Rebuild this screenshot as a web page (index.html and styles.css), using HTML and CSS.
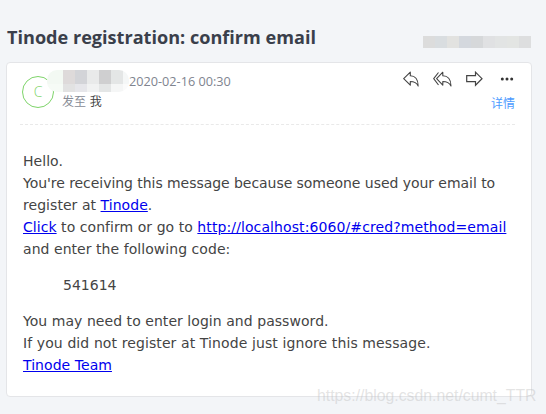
FILE: index.html
```html
<!DOCTYPE html>
<html lang="zh">
<head>
<meta charset="utf-8">
<title>Tinode registration: confirm email</title>
<link rel="stylesheet" href="styles.css">
</head>
<body>
<header class="subject">
  <h1>Tinode registration: confirm email</h1>
  <div class="mosaic-top">
    <i class="t1"></i><i class="t2"></i><i class="t3"></i><i class="t4"></i><i class="t5"></i><i class="t6"></i><i class="t7"></i><i class="t8"></i><i class="t9"></i>
  </div>
</header>
<main class="card">
  <section class="head">
    <div class="avatar">C</div>
    <div class="meta">
      <div class="line1">
        <div class="mosaic-name">
          <i class="n1"></i><i class="n2"></i><i class="n3"></i><i class="n4"></i><i class="n5"></i><i class="n6"></i><i class="n7"></i>
          <i class="m1"></i><i class="m2"></i><i class="m3"></i><i class="m4"></i><i class="m5"></i><i class="m6"></i><i class="m7"></i>
        </div>
        <span class="date">2020-02-16 00:30</span>
      </div>
      <div class="line2"><span class="muted">发至</span> <span class="me">我</span></div>
    </div>
    <div class="actions">
      <div class="icons">
        <svg class="ic-reply" width="16" height="16" viewBox="0 0 16 16"><path d="M0.7 7.7 L7.3 1.2 V4.7 C12 4.7 15.2 8.5 15.2 15 C13.5 11.3 11 10.5 7.3 10.5 V14.2 Z" fill="none" stroke="#444" stroke-width="1.1" stroke-linejoin="round"/></svg>
        <svg class="ic-replyall" width="19" height="16" viewBox="0 0 19 16"><path d="M5.5 1.5 L0.7 7.7 L5.5 14 M9.8 1.2 L3.6 7.7 L9.8 14.2 V10.5 C13.5 10.5 16.2 11.3 18 15 C18 8.5 14.7 4.7 9.8 4.7 Z" fill="none" stroke="#444" stroke-width="1.1" stroke-linejoin="round"/></svg>
        <svg class="ic-forward" width="17" height="16" viewBox="0 0 17 16"><path d="M0.7 4.7 H9.5 V1.2 L16 7.7 L9.5 14.2 V10.7 H0.7 Z" fill="none" stroke="#444" stroke-width="1.2" stroke-linejoin="miter"/></svg>
        <svg class="ic-more" width="14" height="16" viewBox="0 0 14 16"><circle cx="2.3" cy="8" r="1.5" fill="#333"/><circle cx="7" cy="8" r="1.5" fill="#333"/><circle cx="11.7" cy="8" r="1.5" fill="#333"/></svg>
      </div>
      <a class="detail">详情</a>
    </div>
  </section>
  <section class="body">
    <p>Hello.<br>
    <span class="tight">You're receiving this message because someone used your email to</span><br>
    register at <a href="#">Tinode</a>.<br>
    <a href="#">Click</a> to confirm or go to <a class="wide" href="#">http://localhost:6060/#cred?method=email</a><br>
    and enter the following code:</p>
    <p class="code">541614</p>
    <p>You may need to enter login and password.<br>
    <span class="wide">If you did not register at Tinode just ignore this message.</span><br>
    <a href="#">Tinode Team</a></p>
  </section>
</main>
<div class="watermark">https://blog.csdn.net/cumt_TTR</div>
</body>
</html>
```
FILE: styles.css
```css
html, body { margin: 0; padding: 0; }
body {
  position: relative;
  width: 546px;
  height: 414px;
  overflow: hidden;
  background: #f3f5f8;
  font-family: "DejaVu Sans", sans-serif;
}
.subject { height: 62px; box-sizing: border-box; padding: 24px 0 0 7px; position: relative; }
.subject h1 {
  margin: 0;
  font: 700 18.1px/26px "Open Sans", sans-serif;
  color: #3a3f4b;
}
.mosaic-top { position: absolute; left: 423px; top: 36px; display: flex; }
.mosaic-top i { display: block; width: 12px; height: 12px; }
.t1 { background: #dcdcdc; }
.t2 { background: #d9dde0; }
.t3 { background: #e2e2e0; }
.t4 { background: #d4d8de; }
.t5 { background: #d6d8da; }
.t6 { background: #e0e1e3; }
.t7 { background: #e2e4e4; }
.t8 { background: #e3e5e3; }
.t9 { background: #dddedf; }
.card {
  margin-left: 6px;
  width: 526px;
  height: 335px;
  box-sizing: border-box;
  background: #fff;
  border: 1px solid #e4e5e8;
  border-radius: 4px;
}
.head {
  display: flex;
  margin: 0 16px 0 13px;
  height: 62px;
  box-sizing: border-box;
  padding-top: 5px;
  border-bottom: 1px dashed #e9e9e9;
}
.avatar {
  flex: none;
  width: 30px;
  height: 30px;
  margin-top: 8px;
  margin-left: 2px;
  border: 1px solid #7ed46a;
  border-radius: 50%;
  color: #7ed46a;
  font: 300 14px/30px "Open Sans", sans-serif;
  text-align: center;
}
.meta { margin-left: 8px; flex: 1; }
.line1 { display: flex; align-items: center; height: 26px; }
.mosaic-name {
  flex: none;
  margin-left: -15px;
  display: grid;
  grid-template-columns: 16px 12px 12px 12px 12px 12px 6px;
  grid-template-rows: 14px 8px;
  width: 82px;
  height: 22px;
  border-radius: 10px;
  overflow: hidden;
}
.n1 { background: #f3f9f3; }
.n2 { background: #dedada; }
.n3 { background: #d3d4d8; }
.n4 { background: #e9eaea; }
.n5 { background: #cfcfd0; }
.n6 { background: #e4e6e6; }
.n7 { background: #f5f7f7; }
.m1 { background: #f6fbf6; }
.m2 { background: #e2e2e2; }
.m3 { background: #e6e6ea; }
.m4 { background: #f1f2f2; }
.m5 { background: #e4e6e6; }
.m6 { background: #f5f6f6; }
.m7 { background: #fbfbfb; }
.date { font: 12.7px/16px "Open Sans", sans-serif; color: #80848f; }
.line2 { margin-top: -1px; font: 12px/16px "Noto Sans CJK SC", sans-serif; word-spacing: 1px; }
.muted { color: #888c96; }
.me { color: #444; }
.actions { display: flex; flex-direction: column; align-items: flex-end; }
.icons { display: flex; height: 22px; align-items: center; padding-right: 1.5px; }
.ic-replyall, .ic-forward { margin-left: 14px; }
.ic-more { margin-left: 16.5px; }
.detail { margin-top: 5px; font: 12px/16px "Noto Sans CJK SC", sans-serif; color: #4d9bff; }
.body {
  padding: 25px 16px 0 16px;
  font-size: 14px;
  line-height: 22px;
  letter-spacing: 0.05px;
  color: #444;
}
.body p { margin: 0 0 14px; }
.body .code { padding-left: 40px; letter-spacing: 0; }
.body a { color: #0000ee; text-decoration: underline; }
.body .tight { letter-spacing: -0.05px; }
.body .wide { letter-spacing: 0.1px; }
.watermark {
  position: absolute;
  left: 317px;
  top: 387px;
  font: 15.8px/18px "Liberation Sans", sans-serif;
  color: rgba(190, 190, 190, 0.42);
}
```
